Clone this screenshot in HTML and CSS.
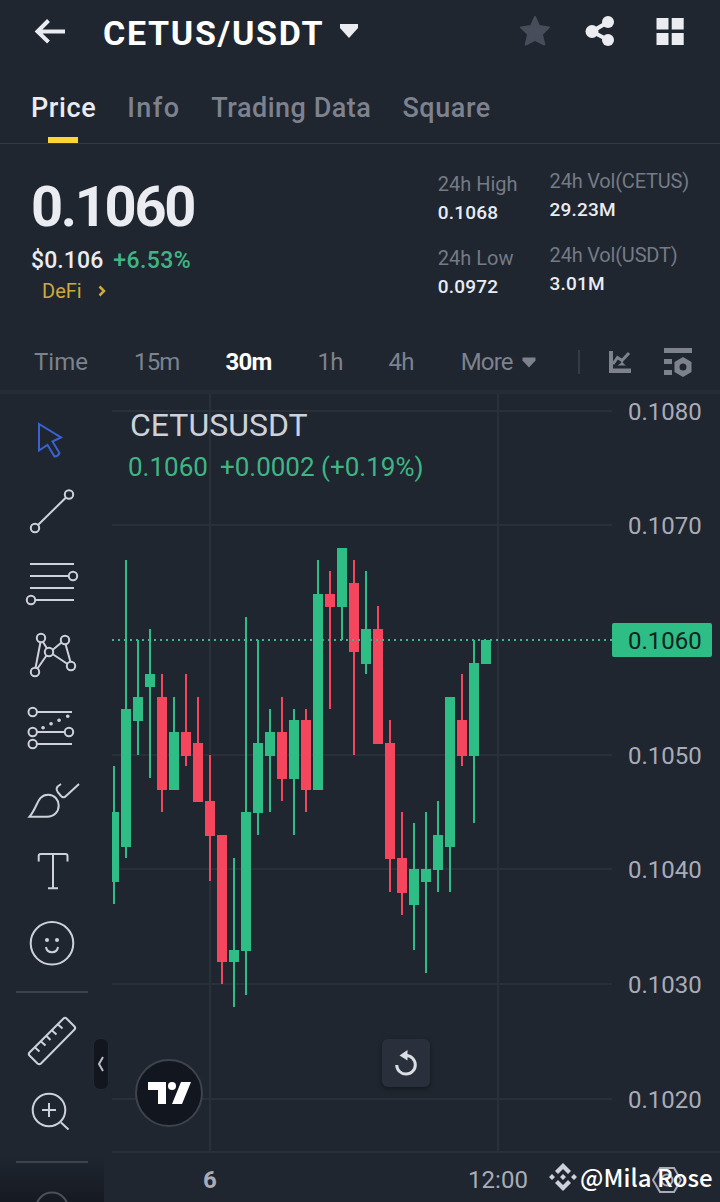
FILE: index.html
```html
<!DOCTYPE html>
<html lang="en">
<head>
    <meta charset="UTF-8">
    <meta name="viewport" content="width=device-width, initial-scale=1.0">
    <title>CETUS/USDT</title>
    <link rel="stylesheet" href="styles.css">
</head>
<body>
    <header class="header">
        <svg class="back-icon" width="32" height="26" viewBox="0 0 32 26"><path d="M14.5 2.5 3.5 13.5 14.5 24M3.5 13.5H31" /></svg>
        <h1 class="title">CETUS/USDT</h1>
        <svg class="title-caret" width="20" height="16" viewBox="0 0 20 16"><path d="M1 1H19V5L10 15 1 5Z" /></svg>
        <div class="header-actions">
            <svg width="32" height="32" viewBox="0 0 32 32"><path class="star" d="M16 2 20 11 30 12.4 22.9 19.2 25.3 29.5 16 24.8 6.7 29.5 9.1 19.2 2 12.4 12 11Z" /></svg>
            <svg width="32" height="32" viewBox="0 0 32 32">
                <path class="share-line" d="M24 7 8 16.500 24 25" />
                <circle cx="24" cy="7" r="6" /><circle cx="8" cy="16.500" r="6.500" /><circle cx="24" cy="25" r="6" />
            </svg>
            <svg class="grid-icon" width="32" height="32" viewBox="0 0 32 32"><path d="M2.500 3H14.500V14.500H2.500ZM17.700 3H29.700V14.500H17.700ZM2.500 18H14.500V30H2.500ZM17.700 18H29.700V30H17.700Z" /></svg>
        </div>
    </header>

    <nav class="tabs">
        <a class="tab active">Price</a>
        <a class="tab tab-info">Info</a>
        <a class="tab tab-data">Trading Data</a>
        <a class="tab">Square</a>
    </nav>

    <section class="summary">
        <div class="price-block">
            <div class="last-price">0.1060</div>
            <div class="price-line"><span class="fiat">$0.106</span><span class="change">+6.53%</span></div>
            <div class="tag">DeFi <svg width="8" height="12" viewBox="0 0 8 12"><path d="M1.500 1.500 6 6 1.500 10.500" /></svg></div>
        </div>
        <div class="stats">
            <div class="stats-col high-low">
                <div class="stat"><div class="stat-label">24h High</div><div class="stat-value">0.1068</div></div>
                <div class="stat"><div class="stat-label">24h Low</div><div class="stat-value">0.0972</div></div>
            </div>
            <div class="stats-col volume">
                <div class="stat"><div class="stat-label">24h Vol(CETUS)</div><div class="stat-value">29.23M</div></div>
                <div class="stat"><div class="stat-label">24h Vol(USDT)</div><div class="stat-value">3.01M</div></div>
            </div>
        </div>
    </section>

    <div class="intervals">
        <span class="interval time">Time</span>
        <span class="interval">15m</span>
        <span class="interval active">30m</span>
        <span class="interval">1h</span>
        <span class="interval">4h</span>
        <span class="interval more">More <svg width="14" height="11" viewBox="0 0 14 11"><path d="M0.500 0.500H13.500V3.500L7 10.500 0.500 3.500Z" /></svg></span>
        <span class="interval-divider"></span>
        <div class="interval-tools">
            <svg width="24" height="26" viewBox="0 0 24 26">
                <path d="M1 2H5V19.500H23V24H1Z" />
                <path class="tool-line" d="M5 15 9.500 8.500 14 11.500 21 4" />
                <path d="M13.500 11.500 16 15 18 16.500H9.500L13 14Z" />
            </svg>
            <svg width="30" height="30" viewBox="0 0 30 30">
                <path d="M1 1H29V6H1ZM1 12H9V17H1ZM1 23H9V28H1Z" />
                <path fill-rule="evenodd" d="M20 10 28.500 15V25L20 30 11.500 25V15ZM20 16.500A3.500 3.500 0 1 0 20 23.500 3.500 3.500 0 1 0 20 16.500Z" />
            </svg>
        </div>
    </div>

    <main class="workspace">
        <aside class="toolbar">
            <svg class="tool selected" viewBox="0 0 56 56"><path d="M15 12 37 25.500 28.500 29.500 35.500 41 Q34 44.500 30.500 44.500L23.500 33 15 38.500Z" /></svg>
            <svg class="tool" viewBox="0 0 56 56"><path d="M14 41 42 13.500" /><circle cx="11" cy="44" r="4.200" /><circle cx="45" cy="10.500" r="4.200" /></svg>
            <svg class="tool" viewBox="0 0 56 56"><path d="M6 8H50M6 20H45M6 32H50M11 44H50" /><circle cx="49" cy="20" r="4.200" /><circle cx="7" cy="44" r="4.200" /></svg>
            <svg class="tool" viewBox="0 0 56 56">
                <path d="M16.500 14 11.500 40M19 14 23 20.500M28.500 22 37.500 14.500M22.500 27.500 13.500 40.500M28.500 26 43.500 36M41.500 16 46.500 34" />
                <circle cx="17" cy="10" r="4.200" /><circle cx="41" cy="12" r="4.200" /><circle cx="25" cy="24" r="4.200" /><circle cx="11" cy="44" r="4.200" /><circle cx="47" cy="38" r="4.200" />
            </svg>
            <svg class="tool" viewBox="0 0 56 56">
                <path d="M13 12H48M13 32H41M13 44H48" />
                <path class="dots" d="M19 27.700h.1M27 23.700h.1M35 20.300h.1M43.700 16.300h.1" />
                <circle cx="8.700" cy="12" r="4.200" /><circle cx="8.700" cy="32" r="4.200" /><circle cx="45" cy="32" r="4.200" /><circle cx="8.700" cy="44" r="4.200" />
            </svg>
            <svg class="tool" viewBox="0 0 56 56"><path d="M5.500 44.700C14 35 13 22.700 24.300 22.700 30.500 22.700 34.700 28 34.700 33.500 34.700 40 30 44.700 23 44.700ZM37 12C32 15 31.500 17 34 20.500L37 24Q39.500 26.500 42 24L55 12" /></svg>
            <svg class="tool" viewBox="0 0 56 56"><path d="M14.700 17.500V12Q14.700 10 16.700 10H41.500Q43.500 10 43.500 12V17.500M29 10V44.300M24 44.300H34" /></svg>
            <svg class="tool" viewBox="0 0 56 56"><circle cx="28" cy="27.300" r="21.300" /><path d="M22 31C23 38 33 38 34 31" /><circle class="eye" cx="23" cy="24" r="2" /><circle class="eye" cx="33" cy="24" r="2" /></svg>
            <hr class="separator">
            <svg class="tool" viewBox="0 0 56 56"><path d="M39.500 6.500Q41 5 42.500 6.500L50.500 14.500Q52 16 50.500 17.500L17 51.500Q15.300 53 13.500 51.500L5.500 43.500Q4 42 5.500 40.500ZM11 35.500 15.500 39.500M17 29.500 21.500 33.500M22.500 24 26.500 28M28 18.500 32.500 22.500M34 12.500 38.500 16.500" /></svg>
            <svg class="tool" viewBox="0 0 56 56"><circle cx="25" cy="26" r="16.300" /><path d="M18 26H32M25 19V33M37 38.500 44.500 45.500" /></svg>
            <hr class="separator low">
            <svg class="tool faded" viewBox="0 0 56 56"><circle cx="28" cy="26.500" r="16" /></svg>
        </aside>

        <div class="chart">
            <svg class="plot" id="plot" viewBox="104 394 616 808"></svg>
            <div class="legend">
                <div class="legend-symbol">CETUSUSDT</div>
                <div class="legend-values"><span>0.1060</span><span>+0.0002 (+0.19%)</span></div>
            </div>
            <div class="collapse"><svg width="8" height="16" viewBox="0 0 8 16"><path d="M6 1 2 8 6 15" /></svg></div>
            <div class="tv-logo">
                <svg width="44" height="24" viewBox="0 0 44 24"><path d="M1 1H19V23H11V9H1ZM34 1H44L35 23H25Z" /><circle cx="25" cy="5" r="4" /></svg>
            </div>
            <div class="reset">
                <svg width="24" height="28" viewBox="0 0 24 28"><path class="reset-arc" d="M12 6.500A9.300 9.300 0 1 1 2.700 16" /><path class="reset-head" d="M5.500 6.500 13.500 1V11.500Z" /></svg>
            </div>
            <svg class="axis-settings" width="30" height="28" viewBox="0 0 30 28"><path d="M8 2H22L29 14 22 26H8L1 14Z" /><circle cx="15" cy="14" r="5.500" /></svg>
            <div class="credit">
                <svg width="28" height="28" viewBox="0 0 28 28"><path d="M14 0 22 8 19 11 14 6 9 11 6 8ZM14 11 17 14 14 17 11 14ZM3 11 6 14 3 17 0 14ZM25 11 28 14 25 17 22 14ZM14 28 22 20 19 17 14 22 9 17 6 20Z" /></svg>
                <span>@Mila Rose</span>
            </div>
        </div>
    </main>

    <script>
        // up/down, wick top, wick bottom, body top, body bottom
        const candles = [
            [1, 766, 904, 812, 882], [1, 560, 858, 709, 847], [1, 640, 755, 697, 721],
            [1, 629, 778, 674, 687], [0, 674, 812, 697, 790], [1, 697, 790, 732, 790],
            [0, 674, 766, 732, 756], [0, 697, 802, 743, 802], [0, 755, 881, 801, 836],
            [0, 835, 984, 835, 962], [1, 858, 1007, 950, 962], [1, 617, 995, 812, 951],
            [1, 640, 835, 743, 813], [1, 709, 812, 732, 756], [0, 697, 801, 732, 779],
            [1, 709, 835, 720, 779], [0, 709, 812, 720, 790], [1, 560, 790, 594, 790],
            [0, 571, 709, 594, 607], [1, 548, 640, 548, 607], [0, 560, 755, 583, 652],
            [1, 571, 674, 629, 664], [0, 606, 744, 629, 744], [0, 720, 892, 743, 859],
            [0, 812, 915, 858, 893], [1, 823, 950, 869, 905], [1, 812, 973, 869, 882],
            [1, 801, 892, 835, 870], [1, 697, 892, 697, 847], [0, 674, 766, 720, 756],
            [1, 640, 823, 663, 756], [1, 640, 664, 640, 664]
        ];
        const prices = [['0.1080', 411], ['0.1070', 525], ['0.1050', 755], ['0.1040', 869], ['0.1030', 984], ['0.1020', 1099]];
        let out = '';

        // Grid and axis labels
        prices.forEach(([label, y]) => {
            out += `<rect class="grid" x="112" y="${y - 1}" width="500" height="2" />`;
            out += `<text class="axis-label" x="628" y="${y + 9}">${label}</text>`;
        });
        out += '<rect class="grid" x="209" y="394" width="2" height="758" />';
        out += '<rect class="grid" x="497" y="394" width="2" height="758" />';
        out += '<rect class="grid" x="112" y="1151" width="608" height="2" />';
        out += '<text class="axis-label day" x="210" y="1188">6</text>';
        out += '<text class="axis-label hour" x="498" y="1188">12:00</text>';

        // Candles, the first one is cut by the left edge
        candles.forEach(([up, high, low, top, bottom], i) => {
            const x = 114 + i * 12;
            const left = Math.max(x - 5, 112);
            out += `<g class="${up ? 'up' : 'down'}"><rect x="${x - 1}" y="${high}" width="2" height="${low - high}" />`;
            out += `<rect x="${left}" y="${top}" width="${x + 5 - left}" height="${bottom - top}" /></g>`;
        });

        // Last price
        out += '<path class="price-dots" d="M112 640H612" />';
        out += '<rect class="price-tag" x="612" y="623" width="100" height="34" rx="2" />';
        out += '<text class="axis-label current" x="628" y="649">0.1060</text>';
        document.getElementById('plot').innerHTML = out;
    </script>
</body>
</html>
```
FILE: styles.css
```css
* {
    margin: 0;
    padding: 0;
    box-sizing: border-box;
}

body {
    width: 720px;
    height: 1202px;
    overflow: hidden;
    background-color: #1f262f;
    color: #eaecf2;
    font-family: Roboto, "Liberation Sans", sans-serif;
}

svg {
    display: block;
    fill: #eaecf2;
    flex-shrink: 0;
}

.header {
    display: flex;
    align-items: center;
    height: 62px;
    padding: 0 34px 0 34px;
}

.back-icon {
    fill: none;
    stroke: #eaecf2;
    stroke-width: 4;
}

.title {
    margin-left: 37px;
    width: 222px;
    font-size: 34px;
    font-weight: 700;
    letter-spacing: 1.7px;
    line-height: 40px;
    color: #fff;
    padding-top: 4px;
}

.title-caret {
    margin-left: 14px;
}

.header-actions {
    display: flex;
    gap: 33px;
    margin-left: auto;
}

.header-actions .grid-icon {
    margin-left: 5px;
}

.header-actions .star {
    fill: #474d5a;
    stroke: #474d5a;
    stroke-width: 2;
    stroke-linejoin: round;
}

.share-line {
    fill: none;
    stroke: #eaecf2;
    stroke-width: 4;
}

.tabs {
    display: flex;
    gap: 31px;
    height: 82px;
    padding-left: 31px;
    border-bottom: 1px solid #333a44;
}

.tab {
    position: relative;
    padding-top: 30px;
    font-size: 27px;
    font-weight: 500;
    line-height: 32px;
    letter-spacing: 0.6px;
    color: #7d828e;
}

.tab.active {
    color: #eaecf2;
}

.tab.active::after {
    content: "";
    position: absolute;
    left: 17px;
    bottom: 0;
    width: 30px;
    height: 6px;
    background: #fcd535;
}

.tab-info {
    letter-spacing: 1.4px;
}

.tab-data {
    letter-spacing: 0.5px;
}

.summary {
    display: flex;
    justify-content: space-between;
    height: 186px;
    padding: 31px 31px 0 31px;
}

.last-price {
    font-size: 56px;
    font-weight: 700;
    line-height: 64px;
    letter-spacing: -2.3px;
}

.price-line {
    display: flex;
    gap: 10px;
    margin-top: 8px;
    font-size: 23px;
    font-weight: 500;
    line-height: 28px;
    letter-spacing: 0.1px;
}

.change {
    letter-spacing: 0.4px;
    color: #3fb584;
}

.tag {
    display: flex;
    align-items: center;
    gap: 16px;
    margin: 4px 0 0 11px;
    font-size: 20px;
    line-height: 24px;
    color: #d0a93c;
}

.tag svg {
    fill: none;
    stroke: #d0a93c;
    stroke-width: 2.5;
}

.stats {
    display: flex;
    gap: 32px;
    margin-top: -4px;
}

.high-low {
    padding-top: 3px;
}

.volume .stat-label {
    letter-spacing: -0.2px;
}

.stat {
    height: 74px;
    white-space: nowrap;
}

.stat-label {
    font-size: 20px;
    line-height: 20px;
    color: #757a86;
}

.stat-value {
    margin-top: 9px;
    font-size: 19px;
    font-weight: 500;
    line-height: 20px;
    letter-spacing: 0.2px;
}

.intervals {
    display: flex;
    align-items: center;
    height: 64px;
    padding: 4px 27px 0 34px;
    border-bottom: 4px solid #262c36;
    font-size: 24px;
    color: #7d828e;
}

.interval {
    margin-right: 46px;
    letter-spacing: -0.8px;
}

.interval.time {
    letter-spacing: 0;
}

.interval.active {
    color: #fff;
    font-weight: 700;
}

.more {
    display: flex;
    align-items: center;
    gap: 9px;
    margin: 0 42px 0 1px;
}

.more svg,
.interval-tools svg {
    fill: #7d828e;
}

.interval-divider {
    width: 2px;
    height: 24px;
    background: #343a46;
}

.interval-tools {
    display: flex;
    align-items: center;
    gap: 31px;
    margin-left: auto;
}

.interval-tools .tool-line {
    fill: none;
    stroke: #7d828e;
    stroke-width: 3;
}

.workspace {
    display: flex;
    height: 808px;
}

.toolbar {
    display: flex;
    flex-direction: column;
    width: 104px;
    height: 808px;
    padding-top: 10px;
    overflow: hidden;
    background: linear-gradient(#1f262f 762px, #151922);
}

.tool {
    width: 56px;
    height: 56px;
    margin: 8px 24px;
    fill: none;
    stroke: #ced1da;
    stroke-width: 2;
}

.tool.selected {
    stroke: #3a62d2;
}

.tool .dots {
    stroke-width: 3.6;
    stroke-linecap: round;
}

.tool .eye {
    fill: #ced1da;
    stroke: none;
}

.tool.faded {
    stroke: #4b505a;
}

.separator {
    flex-shrink: 0;
    height: 2px;
    margin: 11px 16px;
    border: none;
    background: #3d434e;
}

.separator.low {
    margin-top: 13px;
}

.chart {
    position: relative;
    width: 616px;
}

.plot {
    width: 616px;
    height: 808px;
}

.grid {
    fill: #29303a;
}

.axis-label {
    font-size: 24px;
    fill: #a9acb8;
}

.axis-label.day,
.axis-label.hour {
    text-anchor: middle;
}

.axis-label.day {
    font-weight: 700;
}

.axis-label.current {
    fill: #10231f;
}

.up,
.price-tag {
    fill: #2ebd85;
}

.down {
    fill: #f6465d;
}

.price-dots {
    stroke: #43b58c;
    stroke-width: 2;
    stroke-dasharray: 2 4;
}

/* Elements floating over the plot */
.legend {
    position: absolute;
    left: 24px;
    top: 12px;
}

.legend-symbol {
    padding-left: 2px;
    font-size: 32px;
    line-height: 38px;
    color: #ced1da;
}

.legend-values {
    display: flex;
    gap: 12px;
    margin-top: 8px;
    font-size: 26px;
    line-height: 30px;
    color: #3fb584;
}

.collapse {
    position: absolute;
    left: -11px;
    top: 644px;
    display: flex;
    align-items: center;
    justify-content: center;
    width: 16px;
    height: 52px;
    border: 1px solid #242a35;
    border-radius: 7px;
    background: #12161f;
}

.collapse svg {
    fill: none;
    stroke: #b9bcc6;
    stroke-width: 2;
}

.tv-logo {
    position: absolute;
    left: 31px;
    top: 665px;
    display: flex;
    align-items: center;
    justify-content: center;
    width: 68px;
    height: 68px;
    border: 2px solid #3e434e;
    border-radius: 50%;
    background: #12161f;
}

.tv-logo svg {
    fill: #fff;
}

.reset {
    position: absolute;
    left: 278px;
    top: 645px;
    display: flex;
    align-items: center;
    justify-content: center;
    width: 48px;
    height: 48px;
    border-radius: 6px;
    background: #2a303b;
    box-shadow: 0 2px 5px rgba(0, 0, 0, 0.35);
}

.reset-arc {
    fill: none;
    stroke: #dbdde5;
    stroke-width: 3;
}

.reset-head {
    fill: #dbdde5;
}

.axis-settings {
    position: absolute;
    left: 548px;
    top: 772px;
    fill: none;
    stroke: #a9acb8;
    stroke-width: 2;
}

.credit {
    position: absolute;
    left: 445px;
    top: 765px;
    display: flex;
    align-items: center;
    gap: 3px;
    font-family: "Noto Sans CJK SC", "Noto Sans", sans-serif;
    font-size: 24px;
    font-weight: 500;
    line-height: 36px;
    letter-spacing: 0.1px;
    white-space: nowrap;
    color: #fff;
}

.credit svg {
    fill: #ced1da;
}
```
